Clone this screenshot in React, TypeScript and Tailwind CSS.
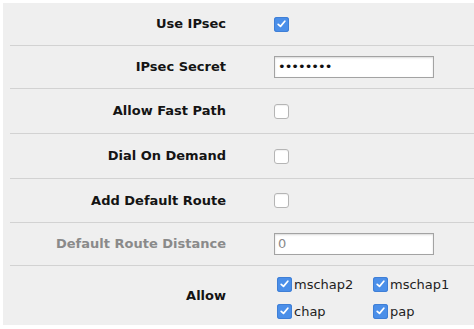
import type { ReactNode } from "react";

const font = { fontFamily: '"DejaVu Sans", Verdana, sans-serif' };

function Check({ on }: { on: boolean }) {
  if (on)
    return (
      <span className="flex h-[15px] w-[15px] shrink-0 items-center justify-center rounded-[3px] bg-[#4b8fe9] shadow-[inset_0_0_0_1px_#3f7fd6]">
        <svg width="9" height="8" viewBox="0 0 9 8" fill="none">
          <path d="M1.2 4.3 L3.5 6.4 L7.8 1.2" stroke="white" strokeWidth="1.7" strokeLinecap="round" strokeLinejoin="round" />
        </svg>
      </span>
    );
  return <span className="block h-[15px] w-[15px] shrink-0 rounded-[3px] border border-[#b5b5b5] bg-white shadow-[inset_0_1px_1px_rgba(0,0,0,0.06)]" />;
}

function Row({ label, h, muted, children, last }: { label: string; h: string; muted?: boolean; children: ReactNode; last?: boolean }) {
  return (
    <div className={`flex items-center ${h} ${last ? "" : "border-b border-[#d2d2d2]"}`}>
      <div className={`w-[216px] shrink-0 text-right text-[13px] font-bold ${muted ? "text-[#8a8a8a]" : "text-[#141414]"}`}>{label}</div>
      <div className="ml-[48px] flex items-center">{children}</div>
    </div>
  );
}

function TextBox({ value, muted }: { value: string; muted?: boolean }) {
  return (
    <div
      className={`flex h-[22px] w-[160px] items-center border border-[#a3a3a3] bg-white px-[3px] text-[13px] shadow-[inset_0_1px_2px_rgba(0,0,0,0.15)] ${muted ? "text-[#8a8a8a]" : "text-[#111] tracking-[-1px]"}`}
    >
      {value}
    </div>
  );
}

export default function App() {
  const opts: [string, boolean][] = [
    ["mschap2", true],
    ["mschap1", true],
    ["chap", true],
    ["pap", true],
  ];
  return (
    <div className="h-[329px] w-[474px] overflow-hidden bg-white pl-[3px] pt-[3px]" style={font}>
      <div className="h-[322px] bg-[#efefef] pl-[7px]">
        <Row label="Use IPsec" h="h-[43px]">
          <Check on />
        </Row>
        <Row label="IPsec Secret" h="h-[43px]">
          <TextBox value="••••••••" />
        </Row>
        <Row label="Allow Fast Path" h="h-[45px]">
          <Check on={false} />
        </Row>
        <Row label="Dial On Demand" h="h-[45px]">
          <Check on={false} />
        </Row>
        <Row label="Add Default Route" h="h-[44px]">
          <Check on={false} />
        </Row>
        <Row label="Default Route Distance" h="h-[43px]" muted>
          <TextBox value="0" muted />
        </Row>
        <Row label="Allow" h="h-[59px]" last>
          <div className="ml-[3px] grid grid-cols-[96px_auto] gap-y-[12px] pt-[4px] text-[13px] text-[#222]">
            {opts.map(([name, on]) => (
              <label key={name} className="flex items-center gap-[2px] leading-none">
                <Check on={on} />
                {name}
              </label>
            ))}
          </div>
        </Row>
      </div>
    </div>
  );
}
